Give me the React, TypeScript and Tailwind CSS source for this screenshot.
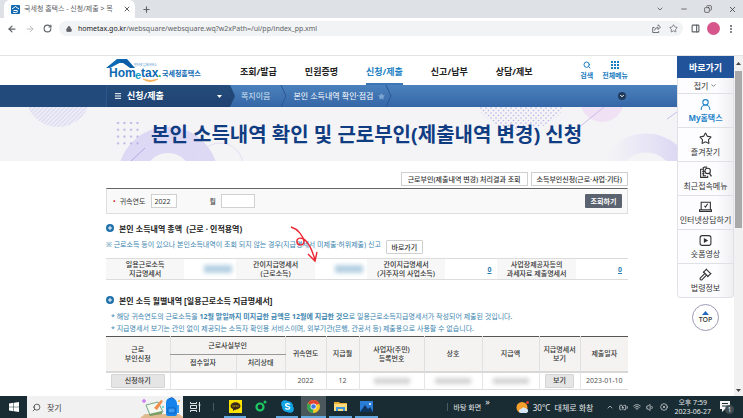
import React, { Component } from "react";
import { ArrowLeft, ArrowRight, BatteryCharging, ChevronDown, ChevronUp, Copy, Gavel, Lock, Menu, Minus, MoreVertical, PanelRight, Plus, RotateCw, Search, Star, UserRound, Volume1, Wifi, X, CircleX } from "lucide-react";

interface State {
    ano: string;
    mes: string;
    busca: string;
}

const menus = ["조회/발급", "민원증명", "신청/제출", "신고/납부", "상담/제보"];

function RecentIcon({ size }: { size: number }) {
    return (
        <svg width={size} height={size} viewBox="0 0 24 24" fill="none" stroke="currentColor" strokeWidth="2">
            <path d="M8 6H3v15h13v-3M9 2h6M8 2v16h5M6 10h5M6 14h4" />
            <circle cx="16" cy="9" r="5" />
            <path d="M19 13l4 6" strokeWidth="2.500" />
        </svg>
    );
}

function ConsultIcon({ size }: { size: number }) {
    return (
        <svg width={size} height={size} viewBox="0 0 24 24" fill="none" stroke="currentColor" strokeWidth="2">
            <path d="M4 17V4h17v13M1 18h22v3H1z" />
            <path d="M10 11l2 2 4-6" />
        </svg>
    );
}

function VideoIcon({ size }: { size: number }) {
    return (
        <svg width={size} height={size} viewBox="0 0 24 24" fill="none" stroke="currentColor" strokeWidth="2">
            <rect x="2" y="3" width="20" height="18" rx="4" />
            <path d="M10 9v6l5-3z" fill="currentColor" />
        </svg>
    );
}

const quickLinks = [
    { name: "My홈택스", icon: UserRound },
    { name: "즐겨찾기", icon: Star },
    { name: "최근접속메뉴", icon: RecentIcon },
    { name: "인터넷상담하기", icon: ConsultIcon },
    { name: "숏폼영상", icon: VideoIcon },
    { name: "법령정보", icon: Gavel },
];

function BrowserBar() {
    return (
        <header className="text-[7px] leading-[10px] text-[#5f6368]">
            <div className="flex h-[18px] items-center bg-[#dee1e6] pl-1">
                <div className="flex h-[18px] w-[131px] items-center rounded-t-md bg-white pl-[7px] pr-1">
                    <svg className="mr-1 h-[9px] w-[9px] shrink-0" viewBox="0 0 9 9">
                        <rect width="9" height="9" rx="1" fill="#1269b0" />
                        <path d="M1 4 4.500 1.500 8 4M2.500 5.500h4" stroke="#fff" fill="none" />
                        <path d="M2 7.300q3 1 5-.8" stroke="#fff" fill="none" />
                    </svg>
                    <span className="flex-1 overflow-hidden whitespace-nowrap">국세청 홈택스 - 신청/제출 &gt; 목</span>
                    <button aria-label="탭 닫기"><X size={8} strokeWidth={3} /></button>
                </div>
                <button className="ml-[7px]" aria-label="새 탭"><Plus size={9} strokeWidth={3} /></button>
                <div className="ml-auto flex items-center gap-[16px] pr-[6px] text-[#333]">
                    <ChevronDown size={8} />
                    <button aria-label="최소화"><Minus size={8} /></button>
                    <button aria-label="이전 크기로"><Copy size={8} className="-scale-x-100" /></button>
                    <button aria-label="닫기"><X size={9} /></button>
                </div>
            </div>
            <div className="flex h-[21px] items-center bg-white pl-[7px] pr-[7px]">
                <button aria-label="뒤로"><ArrowLeft size={10} strokeWidth={3} /></button>
                <button className="ml-2 text-[#b0b3b6]" aria-label="앞으로"><ArrowRight size={10} strokeWidth={2} /></button>
                <button className="ml-2 mr-[7px]" aria-label="새로고침"><RotateCw size={9} strokeWidth={3} /></button>
                <div className="flex h-[15px] flex-1 items-center rounded-full bg-[#f1f3f4] pl-[7px] pr-[5px]">
                    <Lock size={6} strokeWidth={3} fill="#5f6368" />
                    <p className="ml-[6px] flex-1 whitespace-nowrap"><span className="text-[#202124]">hometax.go.kr</span>/websquare/websquare.wq?w2xPath=/ui/pp/index_pp.xml</p>
                    <svg width="9" height="9" viewBox="0 0 9 9" fill="none" stroke="#5f6368" strokeWidth=".9"><path d="M2.500 3.500H.7v5h6V7M2.500 6.500q.3-3 3.500-3V5.500L8.500 3 6 .8v1.500" /></svg>
                    <Star className="ml-[8px]" size={9} />
                </div>
                <PanelRight className="ml-2" size={9} strokeWidth={3} />
                <span className="ml-[7px] h-[13px] w-[13px] rounded-full bg-[#d6568c]"></span>
                <MoreVertical className="ml-[6px]" size={10} strokeWidth={3} />
            </div>
            <div className="h-[17px] border-b border-[#e3e3e5] bg-white"></div>
        </header>
    );
}

function Logo() {
    return (
        <svg className="h-[28px] w-[98px]" viewBox="0 0 98 28" role="img" aria-label="Hometax">
            <path d="M0 12 11 3h10l8 9h-3.500L18 7h-4.500L4 12z" fill="#0d69b3" />
            <path d="M13 4h8l7 8h-4z" fill="#0b5ea5" />
            <text x="28" y="10" fontSize="3" fill="#3b86bf">인터넷 납세서비스</text>
            <g fontFamily="Liberation Sans" fontWeight="bold" fontSize="12">
                <text x="3" y="21" fill="#0d69b3">Hom</text>
                <text x="29" y="23" fontSize="11" fill="#12a0c8">e</text>
                <text x="35" y="21" fill="#0d69b3">tax</text>
                <text x="52" y="21" fill="#45b549">.</text>
            </g>
            <path d="M37 23q7 5 15 0-7 3-15 0z" fill="#f2a33a" stroke="#f2a33a" strokeWidth=".6" />
            <text x="56" y="20" fontSize="7" fontWeight="bold" fill="#0d69b3">국세청홈택스</text>
        </svg>
    );
}

function SiteHeader() {
    return (
        <div>
            <div className="flex h-[29px] items-stretch bg-white pl-[106px]">
                <a href="#home"><Logo /></a>
                <nav className="ml-[36px] flex gap-[28px] text-[9px] font-bold text-[#222]">
                    {menus.map((menu) => (
                        <a key={menu} href="#menu" className={menu === "신청/제출" ? "flex items-center whitespace-nowrap border-b-2 border-[#3c76b4] pt-1 text-[#2482c4]" : "flex items-center whitespace-nowrap border-b-2 border-transparent pt-1"}>{menu}</a>
                    ))}
                </nav>
                <div className="ml-auto mr-[49px] flex gap-[9px] text-[7px] font-bold leading-[10px] text-[#1a7cc1]">
                    <button className="flex flex-col items-center justify-center gap-[2px] whitespace-nowrap"><Search size={8} strokeWidth={3} />검색</button>
                    <button className="flex flex-col items-center justify-center gap-[2px] whitespace-nowrap">
                        <svg width="8" height="8" viewBox="0 0 8 8" fill="#1a7cc1"><path d="M0 0h2v2H0zM3 0h2v2H3zM6 0h2v2H6zM0 3h2v2H0zM3 3h2v2H3zM6 3h2v2H6zM0 6h2v2H0zM3 6h2v2H3zM6 6h2v2H6z" /></svg>
                        전체메뉴
                    </button>
                </div>
            </div>
            <div className="flex h-[22px] items-stretch bg-linear-to-b from-[#4a82bd] to-[#3666a6] text-[8px] text-[#d5e4f3]">
                <div className="w-[106px] bg-[#224a7b]"></div>
                <button className="flex w-[124px] items-center border-l border-[#2f568a] bg-linear-to-b from-[#244d7c] to-[#1f4272] pl-[7px] pr-2 text-[9px] font-bold text-white">
                    <Menu size={8} strokeWidth={3} />
                    <span className="ml-[5px]">신청/제출</span>
                    <svg className="ml-auto" width="5" height="3" viewBox="0 0 5 3"><path d="M0 0h5L2.500 3z" fill="#fff" /></svg>
                </button>
                <svg className="h-[22px] w-[6px]" viewBox="0 0 6 22"><path d="M0 0 5 11 0 22z" fill="#214776" /></svg>
                <a href="#path" className="flex items-center whitespace-nowrap pl-[5px]">쪽지이음</a>
                <svg className="ml-[10px] h-[22px] w-[8px]" viewBox="0 0 8 22"><path d="M1 0 6 11 1 22" fill="none" stroke="#2b5791" /></svg>
                <a href="#path" className="flex items-center whitespace-nowrap pl-[5px] text-white">본인 소득내역 확인·점검</a>
                <Star className="ml-[5px] self-center" size={7} fill="#7ca6d3" color="#7ca6d3" />
                <svg className="h-[22px] w-[8px]" viewBox="0 0 8 22"><path d="M1 0 6 11 1 22" fill="none" stroke="#2b5791" /></svg>
                <button className="ml-auto mr-[51px] flex h-[8px] w-[8px] items-center justify-center self-center rounded-full bg-[#203a5c] text-white" aria-label="펼치기"><ChevronDown size={6} strokeWidth={4} /></button>
            </div>
        </div>
    );
}

function Banner() {
    return (
        <div className="relative h-[54px] overflow-hidden bg-[#f4f4f7]">
            <svg className="absolute inset-0 h-full w-full" viewBox="0 0 677 54" preserveAspectRatio="xMinYMin slice">
                <defs>
                    <pattern id="hatch" width="3" height="3" patternUnits="userSpaceOnUse" patternTransform="rotate(45)">
                        <path d="M1 0v3" stroke="#cdc9ee" strokeWidth="1" />
                    </pattern>
                    <pattern id="dots" width="5" height="5" patternUnits="userSpaceOnUse">
                        <circle cx="1" cy="1" r=".8" fill="#b9b0e6" />
                        <circle cx="3.500" cy="3.500" r=".8" fill="#b9b0e6" />
                    </pattern>
                    <pattern id="grid" x="115" y="13" width="6.500" height="6.800" patternUnits="userSpaceOnUse">
                        <circle cx="3" cy="3" r="1.100" fill="#b3a9de" />
                    </pattern>
                    <linearGradient id="ring">
                        <stop offset="0" stopColor="#dcd8f4" stopOpacity="0" />
                        <stop offset="1" stopColor="#dad5f3" />
                    </linearGradient>
                </defs>
                <circle cx="58" cy="-13" r="33" fill="url(#hatch)" />
                <circle cx="168" cy="70" r="37" fill="none" stroke="#ddd8f4" strokeWidth="26" />
                <path d="M115 13h26v27h-26z" fill="url(#grid)" />
                <circle cx="220" cy="59" r="23" fill="none" stroke="#e2dff3" />
                <path d="M131 54l14-13" stroke="#b7a8e6" />
                <circle cx="521" cy="-28" r="52" fill="url(#dots)" />
                <circle cx="602" cy="-7" r="22" fill="#f0e1f4" />
                <path d="M604 0l-27 22M667 12l10-7" stroke="#cbbdeb" />
                <circle cx="646" cy="74" r="38" fill="none" stroke="url(#ring)" strokeWidth="19" />
            </svg>
            <h1 className="relative whitespace-nowrap pl-[151px] pt-[13px] text-[20px] font-bold leading-[30px] text-[#103c82]">본인 소득내역 확인 및 근로부인(제출내역 변경) 신청</h1>
        </div>
    );
}

function SectionTitle({ children }: { children: React.ReactNode }) {
    return (
        <h2 className="flex h-[12px] items-center whitespace-pre text-[8px] font-bold text-[#222]">
            <span className="mr-[5px] flex h-[8px] w-[8px] items-center justify-center rounded-full bg-[#1d6fab] text-white"><Plus size={6} strokeWidth={4} /></span>
            {children}
        </h2>
    );
}

// valores pessoais ficam borrados
function Hidden({ blue }: { blue?: boolean }) {
    return <span className={blue ? "ml-auto mr-1 block h-[8px] w-[28px] bg-[#b5d0e2] blur-[2px]" : "mx-auto block h-[6px] w-[36px] bg-[#d3d3d3] blur-[2px]"}></span>;
}

function QuickMenu() {
    return (
        <aside className="w-[57px] shrink-0 text-[8px] leading-[11px] text-[#333]">
            <h2 className="flex h-[22px] items-center justify-center bg-[#20539a] text-[9px] font-bold text-white">바로가기</h2>
            <div className="rounded-b border-x border-b border-[#e0e1e6] bg-linear-to-r from-[#fdfdff] from-70% to-[#efeff2]">
                <button className="flex h-[15px] w-full items-center justify-center gap-[2px] text-[8px]">접기<ChevronDown size={7} /></button>
                {quickLinks.map((item, index) => (
                    <a key={item.name} href="#quick" className={index === 0 ? "flex h-[34px] flex-col items-center justify-center gap-[1px] whitespace-nowrap border-t border-[#e0e1e6] font-bold text-[#1a82c8]" : "flex h-[34px] flex-col items-center justify-center gap-[1px] whitespace-nowrap border-t border-[#e0e1e6]"}>
                        <item.icon size={13} />
                        {item.name}
                    </a>
                ))}
            </div>
            <button className="mx-auto mt-[6px] flex h-[27px] w-[27px] flex-col items-center justify-center gap-[1px] rounded-full border border-[#9a9cb5] bg-white text-[7px] font-medium leading-[8px]">
                <svg width="7" height="4" viewBox="0 0 7 4"><path d="M3.500 0 7 4H0z" fill="#2468c0" /></svg>
                TOP
            </button>
        </aside>
    );
}

function Taskbar() {
    return (
        <footer className="flex h-[22px] items-stretch bg-[#1a2c33] text-[7px] leading-[9px] text-[#e4e8e9]">
            <button className="flex w-[27px] items-center justify-center" aria-label="시작">
                <svg width="10" height="10" viewBox="0 0 10 10" fill="#fff"><path d="M0 1.500 4.500.8v4H0zM5 .7 10 0v4.800H5zM0 5.300h4.500v4L0 8.600zM5 5.300h5V10l-5-.7z" /></svg>
            </button>
            <label className="flex w-[156px] items-center bg-[#f1f1f1] pl-[5px] text-[#333]">
                <Search size={9} className="-scale-x-100" />
                <input className="ml-[6px] w-[80px] text-[8px] placeholder:text-[#444]" type="text" name="busca" aria-label="찾기" placeholder="찾기" />
                <svg className="ml-auto h-[22px] w-[43px]" viewBox="0 0 43 22">
                    <path d="M0 22 5 18h34l4 3v1z" fill="#e0b98e" />
                    <path d="M6 9l12-3 5 10-13 3z" fill="#f5f8ef" stroke="#70a884" />
                    <path d="M9 18l13-3v3l-12 2z" fill="#7a9e66" />
                    <path d="M14 12l7-8 2 1-6 9z" fill="#ef8d4d" />
                    <path d="M4 3v4M2 5h4" stroke="#cb7bf0" strokeWidth="1.500" />
                    <path d="M26 7q0-5 5-5t6 5v11q0 2-2 2h-7q-2 0-2-2z" fill="#1583ea" />
                    <path d="M29 3q3-3 5 0" fill="none" stroke="#0d5fbd" />
                    <path d="M28 12h7v5h-7z" fill="#3a9df5" stroke="#0d5fbd" />
                    <path d="M37 9h2v8h-2z" fill="#2e9bf5" />
                    <circle cx="39" cy="5" r="1" fill="#f4b52c" />
                    <circle cx="23" cy="11" r="1" fill="#54ccd8" />
                </svg>
            </label>
            <button className="ml-[7px] flex items-center" aria-label="작업 보기">
                <svg width="11" height="10" viewBox="0 0 11 10" fill="none" stroke="#dfe5e6"><path d="M.5 0v1.500h6V0M.5 10V8.500h6V10M.5 3.500h6v3h-6zM9.500 0v10M8.500 3h2" /></svg>
            </button>
            <span className="ml-[12px] h-2 w-px self-center bg-[#4a5a60]"></span>
            <div className="ml-[10px] flex gap-[3px]">
                <button className="flex w-[22px] items-center justify-center border-b-2 border-[#64a9df]" aria-label="카카오톡">
                    <svg width="13" height="13" viewBox="0 0 13 13"><path d="M0 0h13v13H0z" fill="#fbe300" /><ellipse cx="6.500" cy="6" rx="5" ry="3.700" fill="#3a2a1c" /><path d="M4 8v3l3-2z" fill="#3a2a1c" /><path d="M3.500 6h6" stroke="#fbe300" strokeDasharray="1 .7" /></svg>
                </button>
                <button className="flex w-[24px] items-center justify-center border-b-2 border-transparent" aria-label="네이트온">
                    <svg width="12" height="12" viewBox="0 0 12 12"><circle cx="5" cy="7" r="3.500" fill="none" stroke="#1ec962" strokeWidth="2.200" /><circle cx="10" cy="2" r="1.500" fill="#1ec962" /></svg>
                </button>
                <button className="flex w-[22px] items-center justify-center border-b-2 border-[#64a9df]" aria-label="Skype">
                    <svg width="13" height="13" viewBox="0 0 13 13" fill="#12a5e5"><circle cx="4" cy="4" r="3.800" /><circle cx="9" cy="9" r="3.800" /><circle cx="6.500" cy="6.500" r="5.500" /><path d="M8.800 4.500Q6.500 2.800 4.800 4.200q-.8 1.500 1.700 2.200 2.800.6 2 2.100Q6.500 10 4.300 8.300" fill="none" stroke="#fff" strokeWidth="1.300" /></svg>
                </button>
                <button className="flex w-[25px] items-center justify-center border-b-2 border-[#64a9df] bg-[#4a585e]" aria-label="Chrome">
                    <svg width="13" height="13" viewBox="0 0 13 13"><circle cx="6.500" cy="6.500" r="6.500" fill="#f7c928" /><path d="M6.500 6.500.9 3.200A6.500 6.500 0 0 1 12.100 3.200z" fill="#e24434" /><path d="M6.500 6.500.9 3.200A6.500 6.500 0 0 0 6 13z" fill="#35a353" /><path d="M6.500 3.500h5.700" stroke="#e24434" /><circle cx="6.500" cy="6.500" r="3" fill="#fff" /><circle cx="6.500" cy="6.500" r="2.300" fill="#3b78e0" /></svg>
                </button>
                <button className="flex w-[23px] items-center justify-center border-b-2 border-[#64a9df]" aria-label="파일 탐색기">
                    <svg width="13" height="11" viewBox="0 0 13 11"><path d="M0 1h5l1 1h7v8H0z" fill="#e9ae35" /><path d="M0 3h13v7H0z" fill="#fbdc7d" /><path d="M2 10V6h9v4H9V8H4v2z" fill="#3d97dc" /></svg>
                </button>
                <button className="flex w-[23px] items-center justify-center border-b-2 border-[#64a9df]" aria-label="사진">
                    <svg width="13" height="11" viewBox="0 0 13 11"><path d="M0 0h13v11H0z" fill="#2a7cd4" /><path d="M0 11 5 4l3 4 2-2 3 5z" fill="#10355f" /><circle cx="10" cy="3" r="1" fill="#fff" /></svg>
                </button>
            </div>
            <div className="ml-auto flex items-center whitespace-nowrap pr-[10px]">
                <span className="h-2 w-px bg-[#4a5a60]"></span>
                <span className="ml-[6px]">바탕 화면</span>
                <span className="ml-1 self-start text-[9px] leading-[11px]">»</span>
                <svg className="ml-[26px]" width="13" height="13" viewBox="0 0 13 13"><circle cx="6" cy="6.500" r="5.500" fill="#f6a12b" /><path d="M5 12a2 2 0 0 1 0-4 3 3 0 0 1 5-.5A2.300 2.300 0 0 1 10.500 12z" fill="#d7e7fa" /><circle cx="11.500" cy="1.500" r="1.500" fill="#e33b2e" /></svg>
                <span className="ml-1 text-[8px]">30°C&nbsp; 대체로 화창</span>
                <div className="ml-[13px] flex items-center gap-[5px]">
                    <ChevronUp size={8} />
                    <BatteryCharging size={9} />
                    <Wifi size={8} />
                    <Volume1 size={9} />
                    <CircleX size={8} />
                </div>
                <div className="ml-[6px] text-center">
                    <p>오후 7:59</p>
                    <p>2023-06-27</p>
                </div>
                <button className="relative ml-[9px]" aria-label="알림 1개">
                    <svg width="13" height="14" viewBox="0 0 13 14"><path d="M0 1h10v8H5l-3 3V9H0z" fill="#f4f4f4" /><path d="M2 3.500h6M2 6h6" stroke="#1a2c33" /></svg>
                    <span className="absolute -right-px bottom-0 flex h-[9px] w-[9px] items-center justify-center rounded-full bg-[#3f4c52] text-[7px]">1</span>
                </button>
            </div>
        </footer>
    );
}

export default class App extends Component<{}, State> {
    constructor(props: {}) {
        super(props);
        this.state = {
            ano: "2022",
            mes: "",
            busca: "",
        };
    }

    handleAno = (event: any) => {
        this.setState({ ano: event.target.value });
    }

    handleMes = (event: any) => {
        this.setState({ mes: event.target.value });
    }

    handleSubmit = (event: any) => {
        event.preventDefault();
        console.log(this.state);
    }

    render() {
        return (
            <div className="flex min-h-screen flex-col bg-white font-['Noto_Sans','Noto_Sans_CJK_KR',sans-serif]">
                <BrowserBar />
                <div className="flex flex-1">
                    <main className="min-w-0 flex-1">
                        <SiteHeader />
                        <Banner />
                        <div className="pl-[106px] pr-[49px] pt-[11px] text-[7px] leading-[9px] text-[#333]">
                            <div className="flex justify-end gap-[3px]">
                                <button className="h-[14px] whitespace-nowrap border border-[#cfcfcf] px-[6px] font-medium">근로부인(제출내역 변경) 처리결과 조회</button>
                                <button className="h-[14px] whitespace-nowrap border border-[#cfcfcf] px-[5px] font-medium">소득부인신청(근로·사업·기타)</button>
                            </div>

                            <form className="mt-[2px] flex h-[26px] items-center border border-t-[#666] border-[#dedede] bg-[#f9f9f9] pl-[6px] pr-[5px]" onSubmit={this.handleSubmit}>
                                <span className="mr-1 text-[#d22]">•</span>
                                <label htmlFor="ano">귀속연도</label>
                                <input id="ano" className="ml-[6px] h-[14px] w-[26px] border border-[#d0d0d0] bg-white pl-[2px]" type="text" name="ano" value={this.state.ano} onChange={this.handleAno} />
                                <label htmlFor="mes" className="ml-[32px]">월</label>
                                <input id="mes" className="ml-[5px] h-[14px] w-[34px] border border-[#d0d0d0] bg-white pl-[2px]" type="text" name="mes" value={this.state.mes} onChange={this.handleMes} />
                                <button type="submit" className="ml-auto h-[14px] w-[37px] rounded-[1px] bg-[#5b6370] font-bold text-white">조회하기</button>
                            </form>

                            <section className="relative pt-2">
                                <SectionTitle>본인 소득내역 총액  (근로 · 인적용역)</SectionTitle>
                                <div className="mt-[6px] flex h-[14px] items-start whitespace-nowrap text-[#3c85b0]">
                                    <p>※ 근로소득 등이 있으나 본인소득내역이 조회 되지 않는 경우(지급명세서 미제출·허위제출) 신고</p>
                                    <button className="ml-[5px] h-[14px] w-[37px] rounded-[1px] border border-[#cfcfcf] bg-white font-medium text-[#333]">바로가기</button>
                                </div>
                                <table className="mt-1 w-full table-fixed border-y border-[#dcdcdc] text-center">
                                    <colgroup>
                                        <col className="w-[15%]" /><col className="w-[10%]" /><col className="w-[15%]" /><col className="w-[10%]" />
                                        <col className="w-[15%]" /><col className="w-[10%]" /><col className="w-[15%]" /><col className="w-[10%]" />
                                    </colgroup>
                                    <tbody>
                                        <tr className="h-[21px]">
                                            <th className="bg-[#f7f7f7] font-medium">일용근로소득<br />지급명세서</th>
                                            <td><Hidden blue /></td>
                                            <th className="bg-[#f7f7f7] font-medium">간이지급명세서<br />(근로소득)</th>
                                            <td><Hidden blue /></td>
                                            <th className="bg-[#f7f7f7] font-medium">간이지급명세서<br />(거주자의 사업소득)</th>
                                            <td className="pr-[6px] text-right"><a href="#valor" className="font-bold text-[#2f7fb3] underline">0</a></td>
                                            <th className="whitespace-nowrap bg-[#f7f7f7] font-medium">사업장제공자등의<br />과세자료 제출명세서</th>
                                            <td className="pr-[6px] text-right"><a href="#valor" className="font-bold text-[#2f7fb3] underline">0</a></td>
                                        </tr>
                                    </tbody>
                                </table>
                                <svg className="absolute left-[182px] top-[10px] h-[40px] w-[32px]" viewBox="0 0 32 40" fill="none" stroke="#ec2431" strokeWidth="1.400">
                                    <path d="M3 3C10 5 15 12 16 17c0 5-6 5-7 1-1-5 6-5 9-1 4 4 7 12 9 19M20 30l7 7 2-9" />
                                </svg>
                            </section>

                            <section className="mt-[14px]">
                                <SectionTitle>본인 소득 월별내역 [일용근로소득 지급명세서]</SectionTitle>
                                <ul className="mt-[5px] whitespace-nowrap pl-[5px] leading-[12px] text-[#3c85b0]">
                                    <li>* 해당 귀속연도의 근로소득을 <b>12월 말일까지 미지급한 금액은 12월에 지급한 것으</b>로 일용근로소득지급명세서가 작성되어 제출된 것입니다.</li>
                                    <li>* 지급명세서 보기는 관인 없이 제공되는 소득자 확인용 서비스이며, 외부기관(은행, 관공서 등) 제출용으로 사용할 수 없습니다.</li>
                                </ul>
                                <table className="mt-px w-full table-fixed border-b border-t border-b-[#dcdcdc] border-t-[#555] text-center">
                                    <colgroup>
                                        <col className="w-[64px]" /><col className="w-[66px]" /><col className="w-[49px]" /><col className="w-[41px]" /><col className="w-[33px]" />
                                        <col className="w-[65px]" /><col className="w-[58px]" /><col className="w-[57px]" /><col className="w-[41px]" /><col className="w-[48px]" />
                                    </colgroup>
                                    <thead className="border-b-2 border-[#d8d8d8] bg-[#f4f3f2]">
                                        <tr className="h-[18px]">
                                            <th rowSpan={2} className="font-medium">근로<br />부인신청</th>
                                            <th colSpan={2} className="border-x border-b border-x-[#e0e0e0] border-b-[#999] font-medium">근로사실부인</th>
                                            <th rowSpan={2} className="border-r border-[#e0e0e0] font-medium">귀속연도</th>
                                            <th rowSpan={2} className="border-r border-[#e0e0e0] font-medium">지급월</th>
                                            <th rowSpan={2} className="border-r border-[#e0e0e0] font-medium">사업자(주민)<br />등록번호</th>
                                            <th rowSpan={2} className="border-r border-[#e0e0e0] font-medium">상호</th>
                                            <th rowSpan={2} className="border-r border-[#e0e0e0] font-medium">지급액</th>
                                            <th rowSpan={2} className="border-r border-[#e0e0e0] font-medium">지급명세서<br />보기</th>
                                            <th rowSpan={2} className="font-medium">제출일자</th>
                                        </tr>
                                        <tr className="h-[17px]">
                                            <th className="border-x border-[#e0e0e0] font-medium">접수일자</th>
                                            <th className="border-r border-[#e0e0e0] font-medium">처리상태</th>
                                        </tr>
                                    </thead>
                                    <tbody>
                                        <tr className="h-[18px] divide-x divide-[#e6e6e6] text-[#555]">
                                            <td><button className="mx-auto block h-[14px] w-[54px] rounded-[1px] border border-[#d4d4d4] bg-[#e6e5e5] font-medium text-[#333]">신청하기</button></td>
                                            <td></td>
                                            <td></td>
                                            <td>2022</td>
                                            <td>12</td>
                                            <td><Hidden /></td>
                                            <td><Hidden /></td>
                                            <td><Hidden /></td>
                                            <td><button className="mx-auto block h-[14px] w-[29px] rounded-[1px] border border-[#d4d4d4] bg-[#e6e5e5] font-medium text-[#333]">보기</button></td>
                                            <td>2023-01-10</td>
                                        </tr>
                                    </tbody>
                                </table>
                            </section>
                        </div>
                    </main>
                    <QuickMenu />
                    <div className="flex w-[9px] shrink-0 flex-col items-center bg-[#f1f1f1]">
                        <svg className="my-[6px]" width="5" height="3" viewBox="0 0 5 3"><path d="M2.500 0 5 3H0z" fill="#444" /></svg>
                        <span className="h-[157px] w-[7px] bg-[#a9a9a9]"></span>
                        <svg className="mb-1 mt-auto" width="5" height="3" viewBox="0 0 5 3"><path d="M0 0h5L2.500 3z" fill="#444" /></svg>
                    </div>
                </div>
                <Taskbar />
            </div>
        );
    }
}
